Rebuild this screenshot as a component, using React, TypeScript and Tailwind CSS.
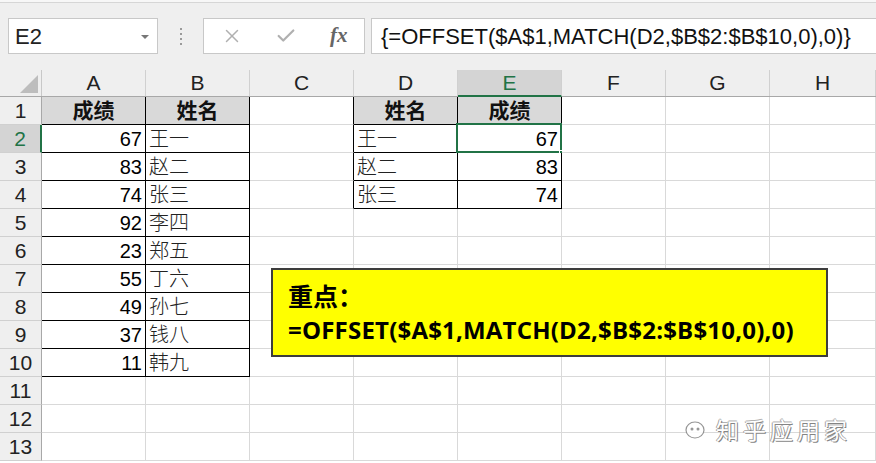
import { X, Check } from "lucide-react";

const cols = ["A", "B", "C", "D", "E", "F", "G", "H"];
const colW = ["w-[104px]", "w-[104px]", "w-[104px]", "w-[104px]", "w-[104px]", "w-[104px]", "w-[104px]", "w-[106px]"];

const data: Record<string, string[]> = {
  A: ["成绩", "67", "83", "74", "92", "23", "55", "49", "37", "11"],
  B: ["姓名", "王一", "赵二", "张三", "李四", "郑五", "丁六", "孙七", "钱八", "韩九"],
  D: ["姓名", "王一", "赵二", "张三"],
  E: ["成绩", "67", "83", "74"],
};

const inTable = (c: number, r: number) =>
  ((c === 0 || c === 1) && r >= 1 && r <= 10) || ((c === 3 || c === 4) && r >= 1 && r <= 4);

const rows = Array.from({ length: 13 }, (_, i) => i + 1);

function Cell({ c, r }: { c: number; r: number }) {
  const col = cols[c];
  const value = data[col]?.[r - 1];
  const right = inTable(c, r) || inTable(c + 1, r) ? "border-r-black" : "border-r-[#d9d9d9]";
  const bottom = inTable(c, r) || inTable(c, r + 1) ? "border-b-black" : "border-b-[#d9d9d9]";
  const head = inTable(c, r) && r === 1;
  const isNum = value !== undefined && /^\d+$/.test(value);
  const selected = c === 4 && r === 2;

  return (
    <div
      className={[
        "relative flex h-[28px] shrink-0 items-center border-r border-b",
        colW[c],
        right,
        bottom,
        head ? "justify-center bg-[#d9d9d9]" : "bg-white",
        !head && isNum ? "justify-end pr-[3px]" : "",
        !head && !isNum ? "pl-[3px]" : "",
      ].join(" ")}
    >
      {value !== undefined ? (
        head ? (
          <span className="text-[21px] font-bold text-[#111]">{value}</span>
        ) : isNum ? (
          <span className="text-[20px] text-black">{value}</span>
        ) : (
          <span className="text-[20px] font-light text-[#222]">{value}</span>
        )
      ) : null}
      {selected ? (
        <>
          <div className="absolute -top-[2px] -left-[2px] -right-[1px] -bottom-[1px] border-2 border-[#217346]" />
          <div className="absolute -right-[5px] -bottom-[5px] h-[7px] w-[7px] border border-white bg-[#217346]" />
        </>
      ) : null}
    </div>
  );
}

export default function App() {
  return (
    <div
      className="relative h-[463px] w-[876px] overflow-hidden bg-white"
      style={{ fontFamily: '"Liberation Sans", "Noto Sans CJK SC", sans-serif' }}
    >
      {/* formula bar */}
      <div className="h-[70px] border-t-[2px] border-t-[#f7f7f7] bg-[#efefef]">
        <div className="h-px bg-[#d6d6d6]" />
        <div className="flex items-center pt-[15px]">
          <div className="ml-[8px] flex h-[36px] w-[150px] items-center justify-between border border-[#c8c8c8] bg-white pl-[6px] pr-[8px]">
            <span className="text-[22px] text-[#222]">E2</span>
            <span className="mt-[2px] h-0 w-0 border-x-[4px] border-t-[4px] border-x-transparent border-t-[#777]" />
          </div>
          <div className="ml-[20px] flex w-[6px] flex-col items-center gap-[3px]">
            <span className="h-[2px] w-[2px] bg-[#9a9a9a]" />
            <span className="h-[2px] w-[2px] bg-[#9a9a9a]" />
            <span className="h-[2px] w-[2px] bg-[#9a9a9a]" />
            <span className="h-[2px] w-[2px] bg-[#9a9a9a]" />
          </div>
          <div className="ml-[19px] flex h-[36px] w-[162px] items-center border border-[#c8c8c8] bg-white">
            <X className="ml-[17px] h-[22px] w-[22px] text-[#b0b0b0]" strokeWidth={1.6} />
            <Check className="ml-[32px] h-[22px] w-[22px] text-[#b0b0b0]" strokeWidth={2.4} />
            <span
              className="ml-[33px] text-[21px] italic font-bold text-[#666]"
              style={{ fontFamily: '"Liberation Serif", serif' }}
            >
              fx
            </span>
          </div>
          <div className="ml-[6px] flex h-[36px] flex-1 items-center border border-r-0 border-[#c8c8c8] bg-white pl-[9px]">
            <span className="text-[22px] text-[#111]">{"{=OFFSET($A$1,MATCH(D2,$B$2:$B$10,0),0)}"}</span>
          </div>
        </div>
      </div>

      {/* column headers */}
      <div className="flex h-[27px] border-b border-b-[#a8a8a8] bg-[#efefef]">
        <div className="relative w-[42px] shrink-0 border-r border-r-[#c8c8c8]">
          <div className="absolute right-[3px] bottom-[3px] h-0 w-0 border-b-[18px] border-l-[18px] border-b-[#bdbdbd] border-l-transparent" />
        </div>
        {cols.map((col, i) => {
          const sel = col === "E";
          return (
            <div
              key={col}
              className={[
                "flex shrink-0 items-center justify-center border-r border-r-[#d0d0d0]",
                colW[i],
                sel ? "-mb-px border-b-2 border-b-[#217346] bg-[#d4d4d4] text-[#217346]" : "text-[#222]",
              ].join(" ")}
            >
              <span className="text-[21px]">{col}</span>
            </div>
          );
        })}
      </div>

      {/* rows */}
      <div className="flex flex-col">
        {rows.map((r) => (
          <div key={r} className="flex">
            <div
              className={[
                "flex h-[28px] w-[42px] shrink-0 items-center justify-center border-b border-b-[#d0d0d0]",
                r === 2
                  ? "border-r-2 border-r-[#217346] bg-[#d4d4d4] text-[#217346]"
                  : "border-r border-r-[#a8a8a8] bg-[#efefef] text-[#222]",
              ].join(" ")}
            >
              <span className="text-[21px]">{r}</span>
            </div>
            {cols.map((_, c) => (
              <Cell key={c} c={c} r={r} />
            ))}
          </div>
        ))}
      </div>

      {/* note box */}
      <div
        className="absolute top-[268px] left-[271px] flex h-[89px] w-[557px] flex-col justify-center gap-[6px] border-2 border-[#3d3d3d] bg-[#ffff00] pl-[15px] text-black"
        style={{ fontFamily: '"Open Sans", "Noto Sans CJK SC", sans-serif' }}
      >
        <span className="text-[25px] font-bold leading-[28px]">重点：</span>
        <span className="text-[24px] font-bold leading-[28px] tracking-[0.2px]">=OFFSET($A$1,MATCH(D2,$B$2:$B$10,0),0)</span>
      </div>

      {/* watermark */}
      <div className="absolute top-[414px] left-[684px] flex items-center gap-[8px] opacity-90">
        <svg width="24" height="22" viewBox="0 0 24 22" fill="none" stroke="#8a8a8a" strokeWidth="1.2">
          <ellipse cx="11" cy="10" rx="9" ry="8" fill="white" />
          <circle cx="8" cy="9" r="0.9" fill="#8a8a8a" />
          <circle cx="14" cy="9" r="0.9" fill="#8a8a8a" />
        </svg>
        <span
          className="text-[23px] tracking-[4px] text-white"
          style={{ textShadow: "1px 1px 0 #777, -1px 0 0 #999, 0 -1px 0 #aaa" }}
        >
          知乎应用家
        </span>
      </div>
    </div>
  );
}
